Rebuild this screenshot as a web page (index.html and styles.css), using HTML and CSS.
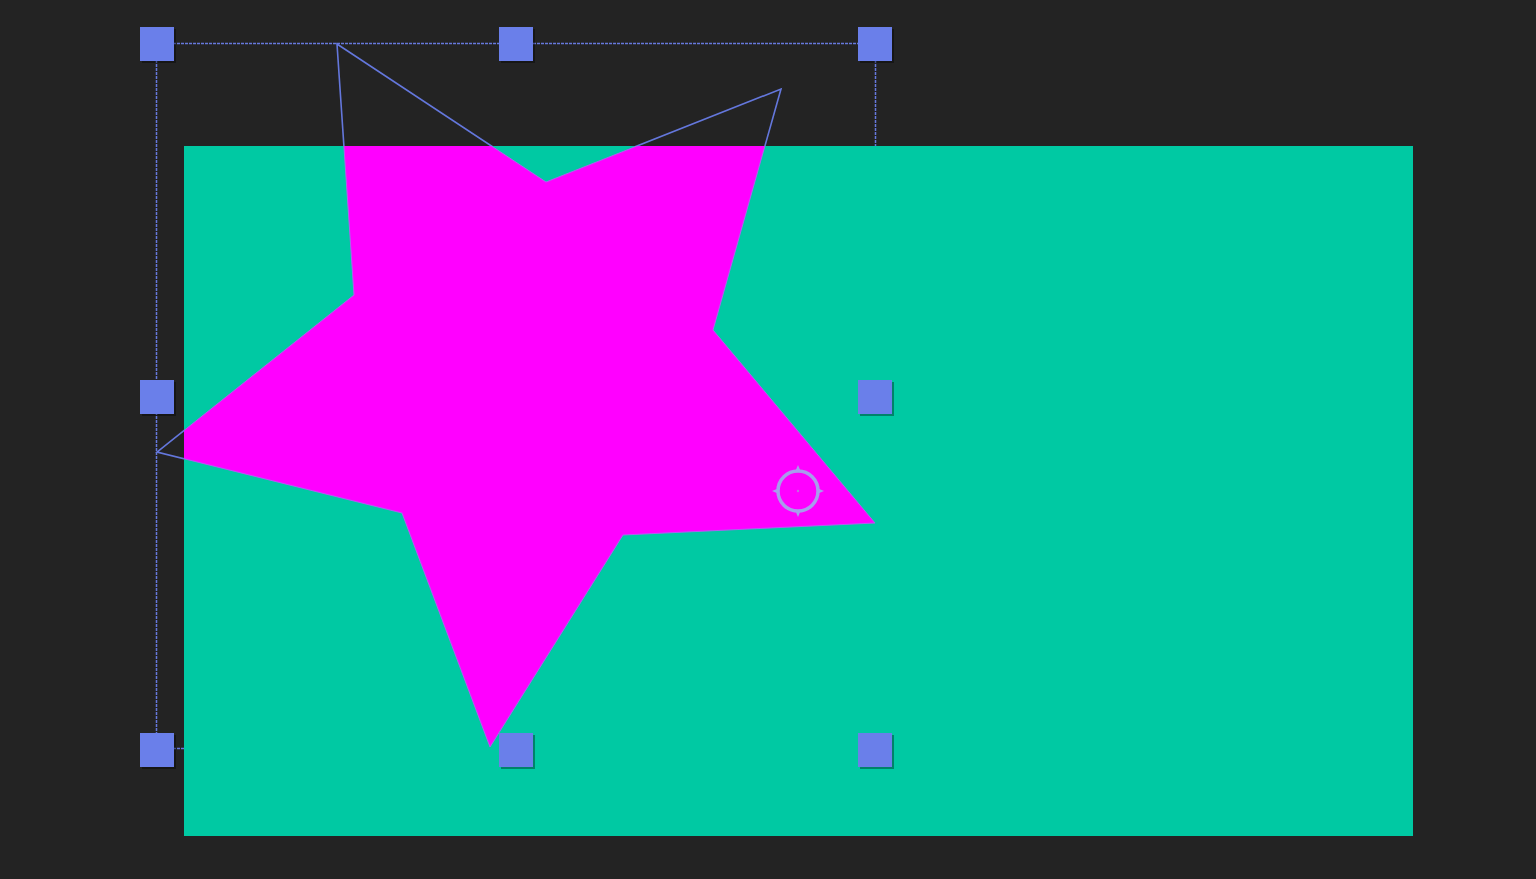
FILE: index.html
```html
<!DOCTYPE html>
<html>
<head>
<meta charset="utf-8">
<link rel="stylesheet" href="styles.css">
</head>
<body>
<div class="canvas">
<svg class="stage" width="1536" height="879" viewBox="0 0 1536 879" xmlns="http://www.w3.org/2000/svg">
  <defs>
    <clipPath id="rectclip"><rect x="184" y="146" width="1229" height="690"/></clipPath>
  </defs>
  <!-- bounding box lines (behind) -->
  <g class="bbox">
    <line x1="157" y1="43.5" x2="875" y2="43.5"/>
    <line x1="156.5" y1="44" x2="156.5" y2="750"/>
    <line x1="875.5" y1="44" x2="875.5" y2="750"/>
    <line x1="157" y1="748.5" x2="875" y2="748.5"/>
  </g>
  <!-- star outline -->
  <polygon class="star-outline" points="337,44 546,182 781,89 713,330 875,523 623,535 490,747 402,513 157,452 354,295"/>
  <!-- teal rect -->
  <rect class="teal" x="184" y="146" width="1229" height="690"/>
  <!-- clipped star fill -->
  <polygon class="star-fill" clip-path="url(#rectclip)" points="337,44 546,182 781,89 713,330 875,523 623,535 490,747 402,513 157,452 354,295"/>
  <!-- pivot target -->
  <g class="pivot">
    <circle cx="798" cy="491" r="20"/>
    <polygon points="795,472 798,465 801,472"/>
    <polygon points="795,510 798,517 801,510"/>
    <polygon points="779,488 772,491 779,494"/>
    <polygon points="817,488 824,491 817,494"/>
    <circle class="dot" cx="798" cy="491" r="1.2"/>
  </g>
  <!-- handles -->
  <g class="handles">
    <g transform="translate(157,44)"><rect class="sh" x="-15" y="-15" width="34" height="34"/><rect class="h" x="-17" y="-17" width="34" height="34"/></g>
    <g transform="translate(516,44)"><rect class="sh" x="-15" y="-15" width="34" height="34"/><rect class="h" x="-17" y="-17" width="34" height="34"/></g>
    <g transform="translate(875,44)"><rect class="sh" x="-15" y="-15" width="34" height="34"/><rect class="h" x="-17" y="-17" width="34" height="34"/></g>
    <g transform="translate(157,397)"><rect class="sh" x="-15" y="-15" width="34" height="34"/><rect class="h" x="-17" y="-17" width="34" height="34"/></g>
    <g transform="translate(875,397)"><rect class="sh" x="-15" y="-15" width="34" height="34"/><rect class="h" x="-17" y="-17" width="34" height="34"/></g>
    <g transform="translate(157,750)"><rect class="sh" x="-15" y="-15" width="34" height="34"/><rect class="h" x="-17" y="-17" width="34" height="34"/></g>
    <g transform="translate(516,750)"><rect class="sh" x="-15" y="-15" width="34" height="34"/><rect class="h" x="-17" y="-17" width="34" height="34"/></g>
    <g transform="translate(875,750)"><rect class="sh" x="-15" y="-15" width="34" height="34"/><rect class="h" x="-17" y="-17" width="34" height="34"/></g>
  </g>
</svg>
</div>
</body>
</html>
```
FILE: styles.css
```css
html, body {
  margin: 0;
  padding: 0;
  background: #232323;
  overflow: hidden;
}
.canvas {
  width: 1536px;
  height: 879px;
  position: relative;
}
.stage {
  display: block;
}
.bbox line {
  stroke: #6678dc;
  stroke-width: 1.5;
  stroke-dasharray: 3 1;
}
.star-outline {
  fill: none;
  stroke: #6477dc;
  stroke-width: 1.6;
  stroke-linejoin: miter;
}
.teal {
  fill: #00c9a3;
}
.star-fill {
  fill: #ff00ff;
  stroke: #b060f0;
  stroke-width: 1;
}
.pivot circle {
  fill: none;
  stroke: #a89cec;
  stroke-width: 3.5;
}
.pivot polygon {
  fill: #a89cec;
}
.pivot .dot {
  fill: #c070e0;
  stroke: none;
}
.handles .h {
  fill: #6a7fea;
}
.handles .sh {
  fill: rgba(0, 0, 0, 0.35);
}
```
